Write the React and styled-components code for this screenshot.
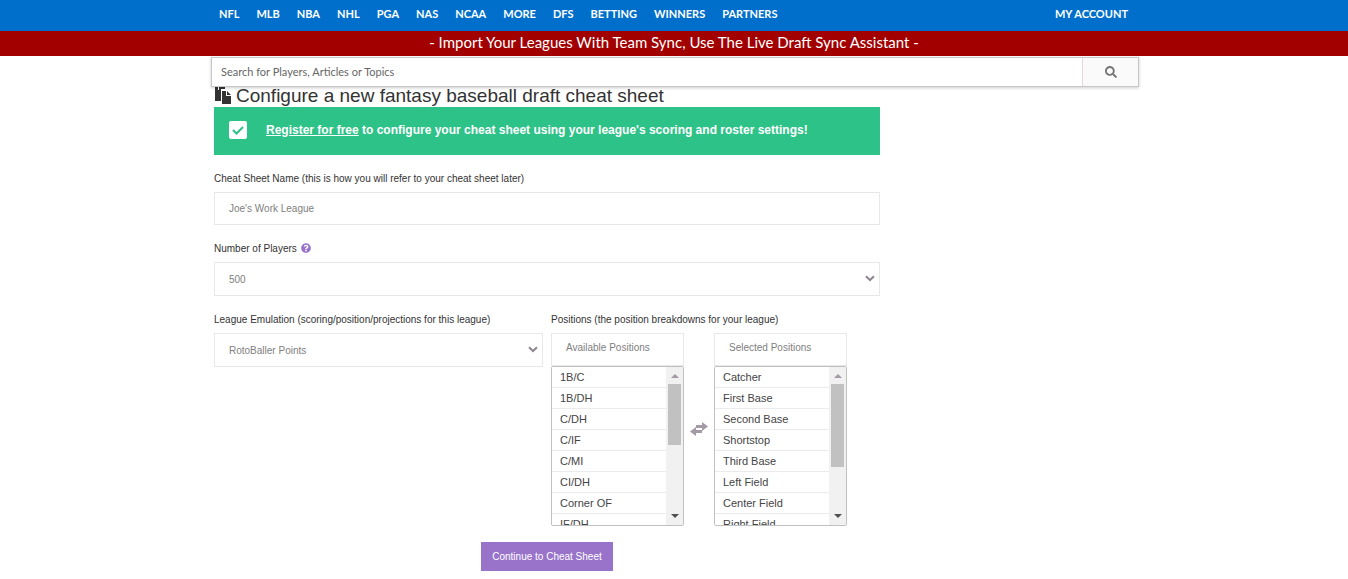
import React from 'react'
import styled, { createGlobalStyle } from 'styled-components'
import { FaSearch, FaQuestionCircle } from 'react-icons/fa'

const navLinks = [
  'NFL',
  'MLB',
  'NBA',
  'NHL',
  'PGA',
  'NAS',
  'NCAA',
  'MORE',
  'DFS',
  'BETTING',
  'WINNERS',
  'PARTNERS',
]

const availablePositions = [
  '1B/C',
  '1B/DH',
  'C/DH',
  'C/IF',
  'C/MI',
  'CI/DH',
  'Corner OF',
  'IF/DH',
  'IF/OF',
  'LF/CF',
  'LF/RF',
  'MI/DH',
  'OF/DH',
  'P/DH',
  'SS/OF',
  'Utility',
]

const selectedPositions = [
  'Catcher',
  'First Base',
  'Second Base',
  'Shortstop',
  'Third Base',
  'Left Field',
  'Center Field',
  'Right Field',
  'Outfield',
  'Starting Pitcher',
  'Relief Pitcher',
]

const Positions = ({ id, label, items, thumb }) => {
  return (
    <PositionBox>
      <PositionLabel htmlFor={id}>{label}</PositionLabel>
      <ListFrame>
        <PositionList id={id} multiple>
          {items.map((item) => (
            <option key={item}>{item}</option>
          ))}
        </PositionList>
        <ScrollTrack aria-hidden='true'>
          <Arrow viewBox='0 0 8 4' $color='#a39aa5'>
            <path d='M0 4 L4 0 L8 4 Z' />
          </Arrow>
          <Thumb $size={thumb} />
          <Arrow viewBox='0 0 8 4' $color='#505050'>
            <path d='M0 0 L4 4 L8 0 Z' />
          </Arrow>
        </ScrollTrack>
      </ListFrame>
    </PositionBox>
  )
}

const Dropdown = ({ id, value }) => {
  return (
    <SelectWrap>
      <Select id={id} defaultValue={value}>
        <option>{value}</option>
      </Select>
      <Chevron viewBox='0 0 10 7' aria-hidden='true'>
        <path d='M1 1.2 L5 5 L9 1.2' />
      </Chevron>
    </SelectWrap>
  )
}

const App = () => {
  return (
    <>
      <GlobalStyle />
      <Nav>
        <NavInner>
          {navLinks.map((link) => (
            <a key={link} href='#'>
              {link}
            </a>
          ))}
          <a className='account' href='#'>
            MY ACCOUNT
          </a>
        </NavInner>
      </Nav>
      <Banner href='#'>
        - Import Your Leagues With Team Sync, Use The Live Draft Sync Assistant
        -
      </Banner>
      <Container>
        <SearchBar>
          <input
            type='text'
            aria-label='Search'
            placeholder='Search for Players, Articles or Topics'
          />
          <button type='submit' aria-label='Submit search'>
            <FaSearch />
          </button>
        </SearchBar>
        <Main>
          <Title>
            <svg viewBox='0 0 18 18' aria-hidden='true'>
              <path d='M1 0 H4 V3 H5 V0 H11 V2 H7 V14 H1 Z' />
              <path d='M8 4 H12 V9 H17 V17 H8 Z' />
              <path d='M13 4 L17 8 H13 Z' />
            </svg>
            Configure a new fantasy baseball draft cheat sheet
          </Title>
          <Notice>
            <svg viewBox='0 0 18 18' aria-hidden='true'>
              <rect width='18' height='18' rx='2' fill='#fff' />
              <path
                d='M4 9 L7.5 12.5 L14 6'
                fill='none'
                stroke='#2dc287'
                strokeWidth='2'
              />
            </svg>
            <p>
              <a href='#'>Register for free</a> to configure your cheat sheet
              using your league's scoring and roster settings!
            </p>
          </Notice>
          <form>
            <Field>
              <FieldLabel htmlFor='name'>
                Cheat Sheet Name (this is how you will refer to your cheat sheet
                later)
              </FieldLabel>
              <TextInput id='name' type='text' placeholder="Joe's Work League" />
            </Field>
            <Field>
              <FieldLabel htmlFor='players'>
                Number of Players <FaQuestionCircle />
              </FieldLabel>
              <Dropdown id='players' value='500' />
            </Field>
            <Columns>
              <Field>
                <FieldLabel htmlFor='emulation'>
                  League Emulation (scoring/position/projections for this
                  league)
                </FieldLabel>
                <Dropdown id='emulation' value='RotoBaller Points' />
              </Field>
              <Field role='group' aria-labelledby='positions'>
                <FieldLabel as='div' id='positions'>
                  Positions (the position breakdowns for your league)
                </FieldLabel>
                <PositionRow>
                  <Positions
                    id='available'
                    label='Available Positions'
                    items={availablePositions}
                    thumb={61}
                  />
                  <Swap viewBox='0 0 18 14' aria-hidden='true'>
                    <path d='M6 3 H12 V0 L18 4.5 L12 9 V6 H6 Z' />
                    <path d='M12 8 H6 V5 L0 9.5 L6 14 V11 H12 Z' />
                    <path className='line' d='M6.5 7 H12' />
                  </Swap>
                  <Positions
                    id='selected'
                    label='Selected Positions'
                    items={selectedPositions}
                    thumb={83}
                  />
                </PositionRow>
              </Field>
            </Columns>
            <Submit type='button'>Continue to Cheat Sheet</Submit>
          </form>
        </Main>
      </Container>
    </>
  )
}

const GlobalStyle = createGlobalStyle`
  * {
    box-sizing: border-box;
  }
  body {
    margin: 0;
    background: #fff;
    color: #333;
    font-family: 'Liberation Sans', Arial, sans-serif;
    font-size: 10px;
  }
  input, select, button {
    font-family: inherit;
    font-size: inherit;
  }
`

const Nav = styled.nav`
  background: #006fcb;
`

const NavInner = styled.div`
  display: flex;
  gap: 17px;
  max-width: 930px;
  margin: 0 auto;
  padding: 0 11px 0 10px;
  a {
    color: #fff;
    font-family: Lato, sans-serif;
    font-size: 11px;
    font-weight: 700;
    line-height: 27px;
    padding-bottom: 4px;
    text-decoration: none;
  }
  .account {
    margin-left: auto;
  }
`

const Banner = styled.a`
  display: block;
  background: #a20000;
  color: #fff;
  font-family: Lato, sans-serif;
  font-size: 15px;
  line-height: 23px;
  padding-bottom: 2px;
  text-align: center;
  text-decoration: none;
`

const Container = styled.div`
  max-width: 930px;
  margin: 1px auto 0;
  padding-left: 2px;
`

const SearchBar = styled.form`
  display: flex;
  height: 30px;
  border: 1px solid #c8c8c8;
  box-shadow: 0 1px 3px rgba(0, 0, 0, 0.2);
  position: relative;
  input {
    flex: 1;
    min-width: 0;
    border: 0;
    padding: 0 9px 2px;
    font-family: Lato, sans-serif;
    font-size: 11px;
  }
  input::placeholder {
    color: #666;
  }
  button {
    width: 56px;
    border: 0;
    border-left: 1px solid #e5dada;
    background: #fafafa;
    color: #777;
    font-size: 12px;
    padding: 0;
  }
  svg {
    display: block;
    margin: 0 auto;
  }
`

const Main = styled.main`
  max-width: 669px;
  padding: 0 0 8px 3px;
`

const Title = styled.h1`
  display: flex;
  gap: 4px;
  margin: 0;
  font-size: 19px;
  font-weight: 400;
  line-height: 18px;
  padding-bottom: 2px;
  svg {
    width: 18px;
    height: 18px;
    fill: #333;
  }
`

const Notice = styled.div`
  display: flex;
  align-items: center;
  gap: 19px;
  min-height: 48px;
  padding: 0 15px 2px;
  background: #2dc287;
  color: #fff;
  font-size: 12px;
  font-weight: 700;
  svg {
    width: 18px;
    height: 18px;
  }
  p {
    margin: 0;
  }
  a {
    color: #fff;
  }
`

const Field = styled.div`
  padding-top: 17px;
  min-width: 0;
`

const FieldLabel = styled.label`
  display: block;
  line-height: 14px;
  margin-bottom: 6px;
  svg {
    margin-left: 1px;
    color: #9873c9;
    vertical-align: -1px;
  }
`

const TextInput = styled.input`
  display: block;
  width: 100%;
  height: 33px;
  border: 1px solid #e8e8e8;
  padding: 0 14px;
  color: #808080;
  &::placeholder {
    color: #808080;
  }
`

const SelectWrap = styled.div`
  position: relative;
`

const Select = styled.select`
  display: block;
  appearance: none;
  width: 100%;
  height: 34px;
  border: 1px solid #e8e8e8;
  border-radius: 0;
  background: #fff;
  padding: 0 14px;
  color: #808080;
`

const Chevron = styled.svg`
  position: absolute;
  right: 5px;
  top: 13px;
  width: 10px;
  height: 7px;
  pointer-events: none;
  fill: none;
  stroke: #8f868f;
  stroke-width: 2;
`

const Columns = styled.div`
  display: grid;
  grid-template-columns: 329px 296px;
  gap: 8px;
`

const PositionRow = styled.div`
  display: flex;
  justify-content: space-between;
  align-items: flex-start;
`

const PositionBox = styled.div`
  width: 133px;
`

const PositionLabel = styled.label`
  display: block;
  height: 33px;
  border: 1px solid #e8e8e8;
  padding: 0 14px;
  color: #808080;
  line-height: 28px;
`

const ListFrame = styled.div`
  display: flex;
  height: 160px;
  border: 1px solid #c0c0c0;
  border-radius: 2px;
`

const PositionList = styled.select`
  flex: 1;
  min-width: 0;
  border: 0;
  border-radius: 0;
  padding: 0;
  outline: 0;
  overflow: hidden;
  font-size: 11px;
  color: #444;
  option {
    padding: 4px 8px;
    border-bottom: 1px solid #ebebeb;
  }
`

const ScrollTrack = styled.div`
  display: flex;
  flex-direction: column;
  align-items: center;
  width: 17px;
  padding: 7px 0;
  background: #f1f1f1;
`

const Arrow = styled.svg`
  width: 8px;
  height: 4px;
  fill: ${(props) => props.$color};
`

const Thumb = styled.div`
  width: 13px;
  height: ${(props) => props.$size}px;
  margin: 6px 0 auto;
  background: #c1c1c1;
`

const Swap = styled.svg`
  width: 18px;
  height: 14px;
  margin-top: 89px;
  fill: #a39aa5;
  .line {
    stroke: #fff;
  }
`

const Submit = styled.button`
  display: block;
  margin: 16px auto 0;
  border: 0;
  padding: 0 11px;
  height: 29px;
  background: #9873c9;
  color: #fff;
`

export default App
